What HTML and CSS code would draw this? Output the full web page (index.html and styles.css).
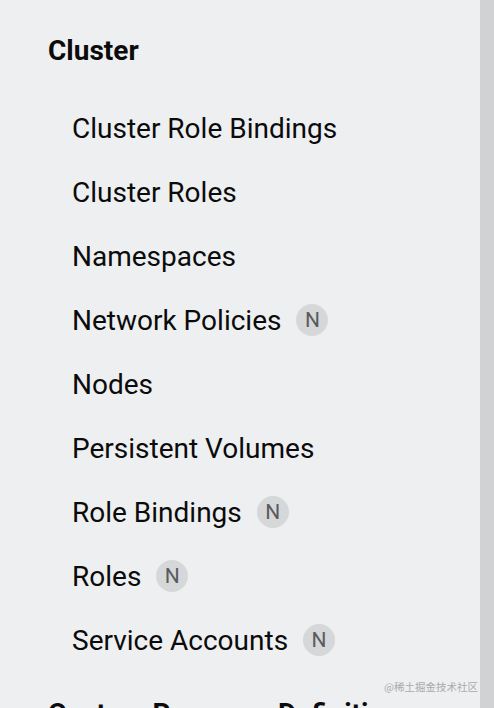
FILE: index.html
```html
<!DOCTYPE html>
<html>
<head>
<meta charset="utf-8">
<link rel="stylesheet" href="styles.css">
</head>
<body>
<div class="page">
  <nav class="sidebar">
    <section class="group">
      <h2 class="group-title">Cluster</h2>
      <ul class="items">
        <li class="item">Cluster Role Bindings</li>
        <li class="item">Cluster Roles</li>
        <li class="item">Namespaces</li>
        <li class="item">Network Policies <span class="badge">N</span></li>
        <li class="item">Nodes</li>
        <li class="item">Persistent Volumes</li>
        <li class="item">Role Bindings <span class="badge">N</span></li>
        <li class="item">Roles <span class="badge">N</span></li>
        <li class="item">Service Accounts <span class="badge">N</span></li>
      </ul>
    </section>
    <section class="group">
      <h2 class="group-title">Custom Resource Definitions</h2>
    </section>
  </nav>
  <div class="scrollbar"></div>
  <div class="watermark">@稀土掘金技术社区</div>
</div>
</body>
</html>
```
FILE: styles.css
```css
html, body {
  margin: 0;
  padding: 0;
  height: 100%;
  overflow: hidden;
}
body {
  background: #eeeff1;
  font-family: Roboto, "Noto Sans", sans-serif;
  color: #0b0b0b;
}
.page {
  position: relative;
  display: flex;
  height: 708px;
  overflow: hidden;
}
.sidebar {
  flex: 1;
  padding-top: 35px;
}
.group + .group {
  margin-top: 26px;
}
.group-title {
  margin: 0 0 29px 48px;
  font-size: 28px;
  font-weight: 700;
  line-height: 32px;
  white-space: nowrap;
}
.items {
  list-style: none;
  margin: 0;
  padding: 0;
}
.item {
  display: flex;
  align-items: center;
  gap: 15px;
  height: 64px;
  padding-left: 72px;
  font-size: 28px;
  white-space: nowrap;
}
.badge {
  display: inline-flex;
  align-items: center;
  justify-content: center;
  width: 32px;
  height: 32px;
  border-radius: 50%;
  background: #d6d7d9;
  color: #5a5b5d;
  font-size: 21px;
}
.scrollbar {
  width: 14px;
  flex: none;
  background: #d1d2d4;
}
.watermark {
  position: absolute;
  right: 16px;
  top: 679px;
  font-family: "Noto Sans CJK SC", sans-serif;
  font-size: 10.5px;
  color: #a9aaac;
}
```
